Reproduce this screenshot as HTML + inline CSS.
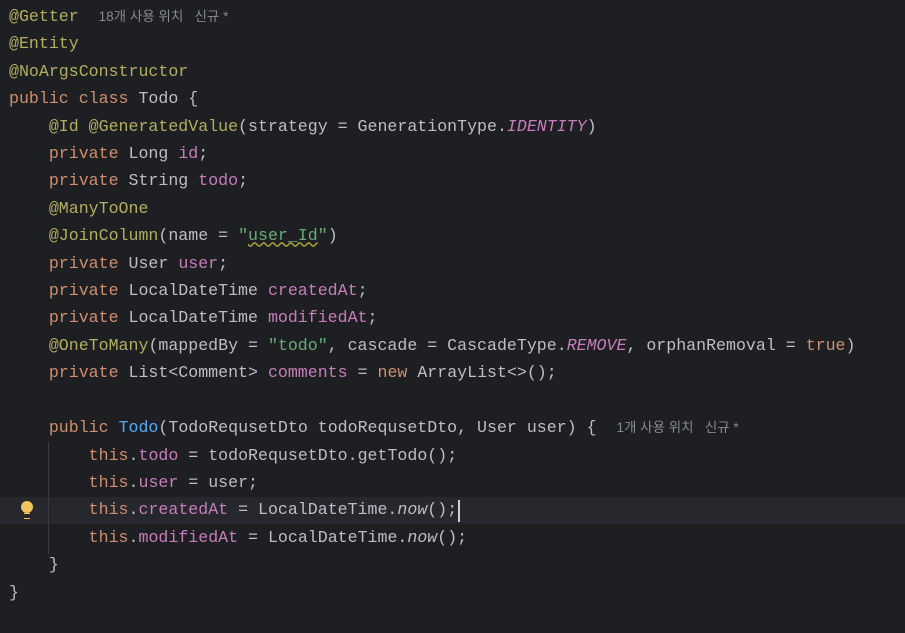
<!DOCTYPE html><html><head><style>
body{margin:0;background:#1e1f22;width:905px;height:633px;overflow:hidden;position:relative}
.c{position:absolute;left:9px;top:3px;font-family:"Liberation Mono",monospace;font-size:16.6px;line-height:27.4px;color:#bcbec4;white-space:pre}
.k{color:#cf8e6d}.a{color:#b3ae60}.f{color:#c77dbb}.s{color:#6aab73}.m{color:#56a8f5}.i{font-style:italic}
.h{color:#868a91;font-family:"Liberation Sans","Noto Sans CJK KR",sans-serif;font-size:13.5px}
.cur{position:absolute;left:0;top:497px;width:905px;height:27px;background:#26282e}
.g{position:absolute;left:48px;top:442px;width:1px;height:112px;background:#393b40}
.bulb{position:absolute;left:21px;top:501px;width:12px;height:12px;border-radius:50%;background:#f2c55c}
.bulb:after{content:"";position:absolute;left:3px;top:12px;width:6px;height:4px;border-top:1px solid #f2c55c;border-bottom:1px solid #f2c55c}
.caret{position:absolute;left:458px;top:500px;width:2px;height:22px;background:#ced0d6}
</style></head><body>
<div class="cur"></div><div class="g"></div><div class="bulb"></div><div class="caret"></div>
<div class="c"><span class="a">@Getter</span>  <span class="h">18개 사용 위치   신규 *</span>
<span class="a">@Entity</span>
<span class="a">@NoArgsConstructor</span>
<span class="k">public class</span> Todo {
    <span class="a">@Id @GeneratedValue</span>(strategy = GenerationType.<span class="f i">IDENTITY</span>)
    <span class="k">private</span> Long <span class="f">id</span>;
    <span class="k">private</span> String <span class="f">todo</span>;
    <span class="a">@ManyToOne</span>
    <span class="a">@JoinColumn</span>(name = <span class="s">"<u style="text-decoration-color:#a39a3a;text-decoration-style:wavy">user_Id</u>"</span>)
    <span class="k">private</span> User <span class="f">user</span>;
    <span class="k">private</span> LocalDateTime <span class="f">createdAt</span>;
    <span class="k">private</span> LocalDateTime <span class="f">modifiedAt</span>;
    <span class="a">@OneToMany</span>(mappedBy = <span class="s">"todo"</span>, cascade = CascadeType.<span class="f i">REMOVE</span>, orphanRemoval = <span class="k">true</span>)
    <span class="k">private</span> List&lt;Comment&gt; <span class="f">comments</span> = <span class="k">new</span> ArrayList&lt;&gt;();

    <span class="k">public</span> <span class="m">Todo</span>(TodoRequsetDto todoRequsetDto, User user) {  <span class="h">1개 사용 위치   신규 *</span>
        <span class="k">this</span>.<span class="f">todo</span> = todoRequsetDto.getTodo();
        <span class="k">this</span>.<span class="f">user</span> = user;
        <span class="k">this</span>.<span class="f">createdAt</span> = LocalDateTime.<span class="i">now</span>();
        <span class="k">this</span>.<span class="f">modifiedAt</span> = LocalDateTime.<span class="i">now</span>();
    }
}</div>
</body></html>
